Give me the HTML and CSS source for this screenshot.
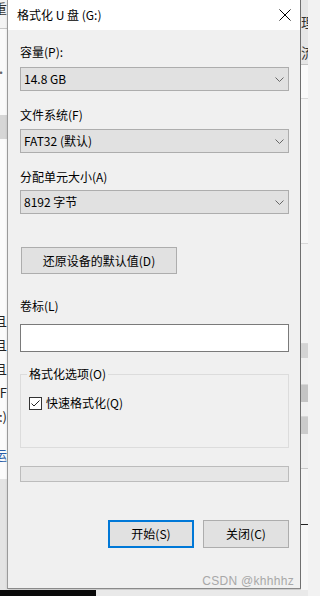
FILE: index.html
```html
<!DOCTYPE html>
<html lang="zh-CN">
<head>
<meta charset="utf-8">
<title>格式化 U 盘 (G:)</title>
<link rel="stylesheet" href="styles.css">
</head>
<body>
<div class="screen">
  <div class="main-row">
    <div class="bg-left">
      <div class="bl-top"><span class="nw">文重</span></div>
      <div class="bl-line"></div>
      <div class="bl-dot"><span>·</span></div>
      <div class="bl-block"></div>
      <div class="bl-white">
        <span class="bl-ch">目且</span>
        <span class="bl-ch">目且</span>
        <span class="bl-ch">目且</span>
        <span class="bl-ch">EF</span>
        <span class="bl-ch">G:)</span>
        <span class="bl-ch blue">运</span>
      </div>
      <div class="bl-gray"></div>
    </div>

    <div class="dialog">
      <div class="titlebar">
        <span class="title">格式化 U 盘 (G:)</span>
        <svg class="close" width="12" height="12" viewBox="0 0 12 12"><path d="M0.5 0.5 L11.5 11.5 M11.5 0.5 L0.5 11.5" stroke="#000" stroke-width="1" fill="none"/></svg>
      </div>
      <div class="body">
        <div class="label l1">容量(P):</div>
        <div class="select s1"><span>14.8 GB</span><svg class="chev" width="9" height="5" viewBox="0 0 9 5"><path d="M0.5 0.5 L4.5 4.5 L8.5 0.5" stroke="#666" fill="none"/></svg></div>

        <div class="label l2">文件系统(F)</div>
        <div class="select s2"><span>FAT32 (默认)</span><svg class="chev" width="9" height="5" viewBox="0 0 9 5"><path d="M0.5 0.5 L4.5 4.5 L8.5 0.5" stroke="#666" fill="none"/></svg></div>

        <div class="label l2">分配单元大小(A)</div>
        <div class="select s3"><span>8192 字节</span><svg class="chev" width="9" height="5" viewBox="0 0 9 5"><path d="M0.5 0.5 L4.5 4.5 L8.5 0.5" stroke="#666" fill="none"/></svg></div>

        <div class="btn restore">还原设备的默认值(D)</div>

        <div class="label l4">卷标(L)</div>
        <div class="input"></div>

        <fieldset class="group">
          <legend>格式化选项(O)</legend>
          <div class="check-row">
            <svg class="checkbox" width="13" height="13" viewBox="0 0 13 13"><rect x="0.5" y="0.5" width="12" height="12" fill="#fff" stroke="#333"/><path d="M2.5 6.5 L5 9 L10.5 3.5" stroke="#222" stroke-width="1" fill="none"/></svg>
            <span>快速格式化(Q)</span>
          </div>
        </fieldset>

        <div class="progress"></div>

        <div class="actions">
          <div class="btn action primary">开始(S)</div>
          <div class="btn action">关闭(C)</div>
        </div>

        <div class="watermark">CSDN @khhhhz</div>
      </div>
    </div>

    <div class="bg-right">
      <div class="br-top">
        <span class="br-ch c1">理</span>
        <span class="br-ch c2">流</span>
      </div>
      <div class="br-seg h34"></div>
      <div class="br-seg h145"></div>
      <div class="br-seg h100"></div>
      <div class="br-block b1"></div>
      <div class="br-seg h27"></div>
      <div class="br-block b2"></div>
      <div class="br-seg h15"></div>
      <div class="br-block b3"></div>
      <div class="br-seg h35"></div>
      <div class="br-seg h55 dark"></div>
      <div class="br-round"></div>
    </div>
  </div>
  <div class="bottom-row">
    <div class="black-bar"></div>
  </div>
</div>
</body>
</html>
```

FILE: styles.css
```css
html, body {
  margin: 0;
  padding: 0;
}
body {
  width: 308px;
  height: 596px;
  overflow: hidden;
  background: #f2f2f2;
  font-family: "Noto Sans CJK SC", "Noto Sans", sans-serif;
  font-size: 12px;
  color: #000;
}
.screen {
  display: flex;
  flex-direction: column;
  width: 308px;
  height: 596px;
}
.main-row {
  display: flex;
  height: 590px;
}

/* left background strip */
.bg-left {
  width: 7px;
  display: flex;
  flex-direction: column;
  overflow: hidden;
  background: #f7f7f7;
}
.nw {
  white-space: nowrap;
  flex-shrink: 0;
}
.bl-top {
  height: 28px;
  display: flex;
  justify-content: flex-end;
  font-size: 14px;
  line-height: 16px;
  color: #333;
  background: #f4f4f4;
}
.bl-line {
  height: 1px;
  background: #c8c8c8;
}
.bl-dot {
  height: 86px;
  display: flex;
  justify-content: flex-end;
  align-items: center;
  color: #666;
  font-size: 12px;
  background: #fafafa;
}
.bl-block {
  height: 24px;
  background: #d6d6d6;
}
.bl-white {
  height: 340px;
  display: flex;
  flex-direction: column;
  align-items: flex-end;
  background: #fbfbfb;
  padding-top: 170px;
  box-sizing: border-box;
}
.bl-ch {
  display: block;
  white-space: nowrap;
  font-size: 13px;
  line-height: 24px;
  color: #222;
}
.bl-ch.blue { color: #2a5ea8; margin-top: 14px; }
.bl-gray {
  flex: 1;
  background: #e4e4e4;
}

/* dialog */
.dialog {
  width: 294px;
  height: 589px;
  box-sizing: border-box;
  border-left: 1px solid #9a9a9a;
  border-right: 1px solid #6f6f6f;
  border-bottom: 1px solid #8a8a8a;
  background: #f0f0f0;
  display: flex;
  flex-direction: column;
  box-shadow: 1px 1px 3px rgba(0,0,0,0.25);
}
.titlebar {
  height: 30px;
  background: #fff;
  display: flex;
  align-items: center;
  justify-content: space-between;
  padding: 0 9px 0 9px;
  flex-shrink: 0;
}
.title {
  line-height: 16px;
}
.close {
  display: block;
  margin-top: -1px;
}
.body {
  display: flex;
  flex-direction: column;
  padding: 14px 11px 0 12px;
}
.label {
  line-height: 16px;
  height: 16px;
}
.l2 { margin-top: 16px; }
.l4 { margin-top: 24px; }

.select {
  height: 24px;
  box-sizing: border-box;
  background: #e1e1e1;
  border: 1px solid #adadad;
  display: flex;
  align-items: center;
  justify-content: space-between;
  padding: 0 4px 0 3px;
  line-height: 16px;
}
.s1 { margin-top: 7px; }
.s2 { margin-top: 6px; }
.s3 { margin-top: 5px; }
.chev { display: block; }

.btn {
  box-sizing: border-box;
  background: #e1e1e1;
  border: 1px solid #adadad;
  display: flex;
  align-items: center;
  justify-content: center;
  line-height: 16px;
}
.restore {
  margin-top: 33px;
  margin-left: 1px;
  width: 156px;
  height: 27px;
}

.input {
  margin-top: 10px;
  height: 28px;
  box-sizing: border-box;
  background: #fff;
  border: 1px solid #7a7a7a;
}

.group {
  margin: 14px 0 0 0;
  padding: 0 0 36px 6px;
  border: 1px solid #dcdcdc;
  min-width: 0;
}
.group legend {
  padding: 0 2px;
  line-height: 16px;
  height: 16px;
}
.check-row {
  margin-top: 13px;
  margin-left: 2px;
  display: flex;
  align-items: center;
  gap: 4px;
  line-height: 16px;
  height: 16px;
}
.checkbox { display: block; }

.progress {
  margin-top: 18px;
  height: 16px;
  box-sizing: border-box;
  background: #e6e6e6;
  border: 1px solid #bcbcbc;
}

.actions {
  margin-top: 38px;
  display: flex;
  justify-content: flex-end;
  gap: 9px;
}
.action {
  width: 86px;
  height: 28px;
}
.primary {
  border: 2px solid #0078d7;
}

.watermark {
  margin-top: 25px;
  margin-right: -5px;
  align-self: flex-end;
  font-family: "Liberation Sans", Arial, sans-serif;
  font-size: 12px;
  line-height: 16px;
  color: #a8a8a8;
  letter-spacing: 0.3px;
}

/* right background strip */
.bg-right {
  width: 7px;
  display: flex;
  flex-direction: column;
  overflow: hidden;
  background: #fafafa;
}
.br-top {
  height: 65px;
  background: #e6e6e6;
  border-bottom: 1px solid #c4c4c4;
  display: flex;
  flex-direction: column;
  padding-top: 14px;
  box-sizing: border-box;
}
.br-ch {
  display: block;
  font-size: 14px;
  line-height: 16px;
  color: #333;
  white-space: nowrap;
}
.br-ch.c2 { margin-top: 14px; }
.br-seg {
  flex-shrink: 0;
  border-bottom: 1px solid #d8d8d8;
  box-sizing: border-box;
}
.h34 { height: 34px; }
.h145 { height: 145px; background: #f6f6f6; }
.h100 { height: 100px; background: #f3f3f3; }
.h27 { height: 27px; background: #f0f0f0; }
.h15 { height: 15px; background: #f0f0f0; }
.h35 { height: 35px; background: #efefef; border-bottom-color: #c8c8c8; }
.h55 { height: 56px; background: #f4f4f4; }
.h55.dark { border-bottom: 1px solid #222; }
.br-block { flex-shrink: 0; }
.b1 { height: 14px; background: #d4d4d4; }
.b2 { height: 17px; background: #c4c4c4; }
.b3 { height: 17px; background: #cbcbcb; }
.br-round {
  flex: 1;
  background: #f6f6f6;
}

.bottom-row {
  height: 6px;
  display: flex;
  background: #e9e9e9;
}
.black-bar {
  width: 96px;
  background: #0a0a0a;
}
```
